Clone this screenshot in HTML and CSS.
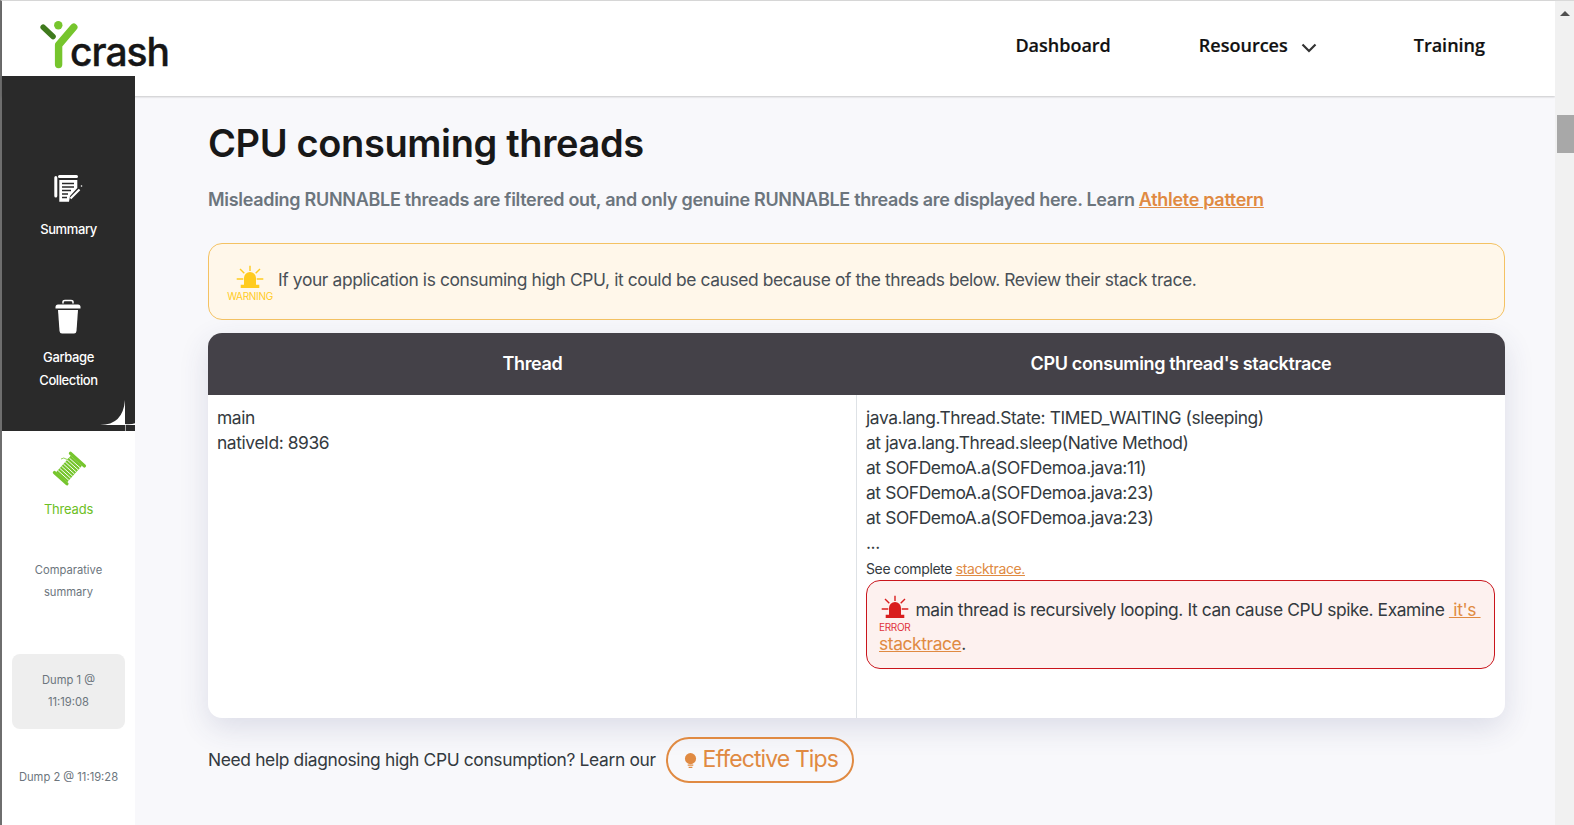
FILE: index.html
```html
<!DOCTYPE html>
<html lang="en">
<head>
<meta charset="utf-8">
<title>CPU consuming threads</title>
<link rel="stylesheet" href="styles.css">
</head>
<body>
<div class="frame">
  <div class="viewport">
    <header class="topbar">
      <a class="logo">
        <svg class="logo-mark" viewBox="0 0 40 50" width="40" height="50">
          <circle cx="18.3" cy="4.2" r="4.2" fill="#76c52d"/>
          <path d="M3.2 6.2 L13 15.5" stroke="#3f7a1d" stroke-width="5.6" stroke-linecap="round"/>
          <path d="M33.8 6.2 L18.6 24 V43.5" stroke="#76c52d" stroke-width="7.4" stroke-linecap="round" stroke-linejoin="round" fill="none"/>
        </svg>
        <span class="logo-text">crash</span>
      </a>
      <nav class="nav">
        <a class="nav-link nav-dash">Dashboard</a>
        <a class="nav-link nav-res">Resources
          <svg class="chev" viewBox="0 0 16 10" width="16" height="10"><path d="M1.5 1.5 L8 8 L14.5 1.5" fill="none" stroke="#333" stroke-width="2.2"/></svg>
        </a>
        <a class="nav-link">Training</a>
      </nav>
    </header>

    <aside class="sidebar">
      <div class="side-dark">
        <div class="side-item side-summary">
          <svg viewBox="0 0 30 30" width="30" height="30" class="side-icon">
            <path d="M6.5 3.4 H23.5 M2.8 4.5 V23" stroke="#fff" stroke-width="3" stroke-linecap="round" fill="none"/>
            <path d="M6.3 7 H24.3 V15 L17 23 L16 28.7 H6.3 Z" fill="#fff"/>
            <path d="M9 10.5 H21 M9 14 H21 M9 17.5 H18 M9 21 H15 M9 24.5 H14" stroke="#2a2a2a" stroke-width="1.7"/>
            <path d="M17.5 25.5 L26.5 16.5" stroke="#fff" stroke-width="2.2"/>
            <circle cx="28.5" cy="13" r=".8" fill="#fff"/>
          </svg>
          <span class="side-label">Summary</span>
        </div>
        <div class="side-item side-gc">
          <svg viewBox="0 0 28 36" width="28" height="36" class="side-icon">
            <path d="M9 4.5 V3 Q9 1.5 11 1.5 H17 Q19 1.5 19 3 V4.5" stroke="#fff" stroke-width="1.5" fill="none"/>
            <path d="M1.5 8 Q1.5 5.5 4 5.5 H24 Q26.5 5.5 26.5 8 V9.5 H1.5 Z" fill="#fff"/>
            <path d="M4 11 H24 L22.5 32 Q22.3 34.5 20 34.5 H8 Q5.7 34.5 5.5 32 Z" fill="#fff"/>
          </svg>
          <span class="side-label">Garbage<br>Collection</span>
        </div>
        <svg class="side-corner" viewBox="0 -1 36 32" width="36" height="32">
          <path d="M0 25 Q23 25 25 0 V25 Z" fill="#fff"/>
          <path d="M25 25 H36 V23 Q30 25 25 24 Z M25 25 V32 H25.6 V25 Z" fill="#fff"/>
        </svg>
      </div>
      <div class="side-light">
        <div class="side-item side-threads">
          <svg viewBox="0 0 36 36" width="36" height="36" class="side-icon">
            <g transform="rotate(-48 18 18)">
              <rect x="4" y="8" width="3.2" height="20" rx="1.5" fill="#76c52d"/>
              <rect x="29" y="7" width="3.2" height="22" rx="1.5" fill="#76c52d"/>
              <rect x="7" y="10.5" width="22" height="15" fill="#76c52d"/>
              <path d="M9.5 10.5 V25.5 M12.3 10.5 V25.5 M15.1 10.5 V25.5 M17.9 10.5 V25.5 M20.7 10.5 V25.5 M23.5 10.5 V25.5 M26.3 10.5 V25.5" stroke="#fff" stroke-width=".9"/>
            </g>
            <path d="M10 8 Q13 6 15 8 T22 3" stroke="#76c52d" stroke-width=".8" fill="none"/>
          </svg>
          <span class="side-label side-active">Threads</span>
        </div>
        <div class="side-sub side-comp">Comparative<br>summary</div>
        <div class="side-sub side-dump1">Dump 1 @<br>11:19:08</div>
        <div class="side-sub side-dump2">Dump 2 @ 11:19:28</div>
      </div>
    </aside>

    <main class="main">
      <h1 class="title">CPU consuming threads</h1>
      <p class="lead">Misleading RUNNABLE threads are filtered out, and only genuine RUNNABLE threads are displayed here. Learn <a class="link">Athlete pattern</a></p>

      <div class="warn">
        <div class="badge badge-warn">
          <svg viewBox="0 0 28 24" width="28" height="24"><path d="M14 .7 V6 M4 4 L8.3 8.3 M24 4 L19.7 8.3 M.7 14 H7.3 M20.7 14 H27.3" stroke="#ffcb1f" stroke-width="1.4" fill="none"/><path d="M8 19.7 V13 A6 6 0 0 1 20 13 V19.7 Z M4.7 19.7 H23.3 V23 H4.7 Z" fill="#ffcb1f"/></svg>
          <span>WARNING</span>
        </div>
        <span class="warn-text">If your application is consuming high CPU, it could be caused because of the threads below. Review their stack trace.</span>
      </div>

      <div class="table">
        <div class="thead">
          <div class="th">Thread</div>
          <div class="th">CPU consuming thread's stacktrace</div>
        </div>
        <div class="tbody">
          <div class="td td-left">main<br>nativeId: 8936</div>
          <div class="td td-right">
            <div class="stack">java.lang.Thread.State: TIMED_WAITING (sleeping)<br>at java.lang.Thread.sleep(Native Method)<br>at SOFDemoA.a(SOFDemoa.java:11)<br>at SOFDemoA.a(SOFDemoa.java:23)<br>at SOFDemoA.a(SOFDemoa.java:23)<br>...</div>
            <div class="see">See complete <a class="link">stacktrace.</a></div>
            <div class="error"><span class="badge badge-err"><svg viewBox="0 0 28 24" width="28" height="24"><path d="M14 .7 V6 M4 4 L8.3 8.3 M24 4 L19.7 8.3 M.7 14 H7.3 M20.7 14 H27.3" stroke="#d91e1e" stroke-width="1.4" fill="none"/><path d="M8 19.7 V13 A6 6 0 0 1 20 13 V19.7 Z M4.7 19.7 H23.3 V23 H4.7 Z" fill="#d91e1e"/></svg><span>ERROR</span></span>main thread is recursively looping. It can cause CPU spike. Examine <a class="link">&nbsp;it's&nbsp; stacktrace</a>.</div>
          </div>
        </div>
      </div>

      <div class="help">
        <span class="help-text">Need help diagnosing high CPU consumption? Learn our</span>
        <a class="tips">
          <svg viewBox="0 0 14 18" width="13" height="17"><circle cx="7" cy="7" r="6" fill="#e08a42"/><path d="M4 14 H10 M5 16.5 H9" stroke="#e08a42" stroke-width="1.3"/></svg>
          <span class="tips-text">Effective Tips</span>
        </a>
      </div>
    </main>
  </div>
  <div class="scrollbar">
    <div class="sb-arrow"></div>
    <div class="sb-thumb"></div>
  </div>
</div>
</body>
</html>
```
FILE: styles.css
```css
* { box-sizing: border-box; }
html, body { margin: 0; height: 100%; overflow: hidden; }
body { font-family: Inter, "Liberation Sans", sans-serif; color: #212529; background: #fff; }
.frame { display: flex; height: 825px; border-top: 1px solid #d9d9d9; border-left: 2px solid #6e6e6e; }
.viewport { flex: 1; min-width: 0; display: grid; grid-template-columns: 133px 1fr; grid-template-rows: 75px 20px 1fr; background: #f8f8fb; }
.topbar { grid-column: 1 / 3; grid-row: 1 / 3; display: flex; justify-content: space-between; background: #fff; box-shadow: 0 1px 2px rgba(0,0,0,.2); padding: 19px 70px 0 38px; position: relative; }
.logo { display: flex; align-items: flex-start; }
.logo-mark { margin-top: 1px; margin-right: -10px; flex: none; }
.logo-text { font-family: Inter, sans-serif; font-weight: 500; font-size: 39px; line-height: 40px; color: #161616; margin-top: 12px; letter-spacing: -1px; -webkit-text-stroke: .4px #161616; }
.nav { display: flex; align-items: flex-start; padding-top: 12px; }
.nav-link { font-family: "Open Sans", sans-serif; font-weight: 600; font-size: 18px; line-height: 26px; color: #111; -webkit-text-stroke: .2px #111; }
.nav-dash { margin-right: 88px; }
.nav-res { margin-right: 97px; display: flex; align-items: center; white-space: nowrap; }
.chev { margin-left: 13px; margin-top: 5px; }
.sidebar { grid-column: 1; grid-row: 2 / 4; position: relative; z-index: 1; background: #fff; display: flex; flex-direction: column; }
.side-dark { background: #2a2a2a; height: 355px; position: relative; display: flex; flex-direction: column; align-items: center; color: #fff; }
.side-item { display: flex; flex-direction: column; align-items: center; }
.side-summary { padding-top: 97px; }
.side-gc { padding-top: 58px; }
.side-label { font-size: 13px; font-weight: 500; line-height: 23px; text-align: center; color: #fff; letter-spacing: -.4px; }
.side-summary .side-label { margin-top: 15px; }
.side-gc .side-label { margin-top: 11px; }
.side-corner { position: absolute; left: 98px; bottom: 0; }
.side-light { flex: 1; display: flex; flex-direction: column; align-items: center; }
.side-threads { padding-top: 20px; }
.side-threads .side-label { margin-top: 11px; color: #6cc024; font-weight: 400; letter-spacing: -.2px; }
.side-sub { font-size: 11.2px; line-height: 22px; text-align: center; color: #6c757d; }
.side-comp { margin-top: 38px; }
.side-dump1 { margin-top: 51px; width: 113px; height: 75px; padding-top: 15px; background: #eee; border-radius: 8px; }
.side-dump2 { margin-top: 37px; }
.main { grid-column: 2; grid-row: 3; padding: 26px 50px 0 73px; min-width: 0; }
.title { font-size: 38px; font-weight: 600; line-height: 43px; margin: 0; color: #181818; letter-spacing: -.38px; }
.lead { font-size: 18px; font-weight: 600; line-height: 27px; margin: 21px 0 0; color: #6c757d; letter-spacing: -.3px; }
.link { color: #e08a42; text-decoration: underline; }
.warn { display: flex; align-items: center; height: 77px; margin-top: 30px; padding: 0 18px 0 19px; background: #fff7ea; border: 1px solid #f4c263; border-radius: 14px; font-size: 17.4px; color: #495057; gap: 6px; letter-spacing: -.38px; }
.warn-text { padding-bottom: 4px; }
.badge { display: inline-flex; flex-direction: column; align-items: center; font-size: 10px; line-height: 10px; letter-spacing: -.3px; }
.badge-warn { color: #ffcb1f; width: 44px; margin-top: 2px; gap: 2px; }
.table { margin-top: 13px; height: 385px; background: #fff; border-radius: 14px; box-shadow: 0 10px 30px rgba(50,60,110,.14); display: flex; flex-direction: column; }
.thead { display: grid; grid-template-columns: 649px 1fr; height: 62px; background: #444148; border-radius: 14px 14px 0 0; }
.th { display: flex; align-items: center; justify-content: center; color: #fff; font-size: 18px; font-weight: 600; letter-spacing: -.36px; padding-bottom: 2px; }
.tbody { flex: 1; display: grid; grid-template-columns: 649px 1fr; font-size: 17.4px; line-height: 25px; letter-spacing: -.4px; }
.td { padding: 10px 9px; color: #343a40; }
.td-left { border-right: 1px solid #dee2e6; }
.see { font-size: 14px; line-height: 20px; margin-top: 4px; letter-spacing: -.38px; }
.error { margin-top: 1px; border: 1px solid #c9151c; border-radius: 14px; background: #fdf1ef; padding: 12px 12px 7px; line-height: 34px; width: 629px; }
.badge-err { color: #e0323c; height: 34px; vertical-align: top; margin-right: 5px; gap: 3px; }
.badge-err svg { margin-top: 2px; flex: none; }
.help { display: flex; align-items: center; gap: 10px; margin-top: 19px; font-size: 17.4px; color: #343a40; letter-spacing: -.35px; }
.help-text { padding-bottom: 2px; }
.tips { display: inline-flex; align-items: center; gap: 6px; height: 46px; padding: 0 14px 0 16px; border: 2px solid #e08a42; border-radius: 24px; color: #e08a42; font-size: 23px; letter-spacing: -.9px; }
.tips-text { padding-bottom: 3px; }
.scrollbar { flex: none; width: 19px; background: #f1f1f1; position: relative; padding-top: 10px; }
.sb-arrow { width: 0; height: 0; margin: 0 auto; border: 5px solid transparent; border-top: 0; border-bottom: 5px solid #505050; }
.sb-thumb { position: absolute; left: 2px; right: 0; top: 114px; height: 38px; background: #a8a8a8; }
```
